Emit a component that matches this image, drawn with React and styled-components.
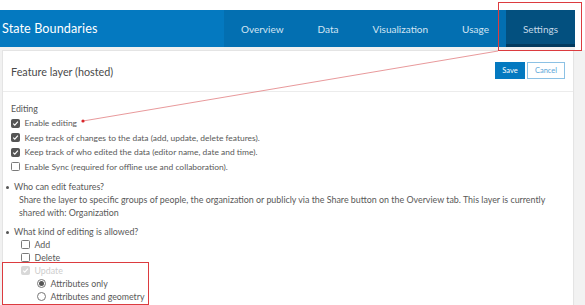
import React from "react";
import styled, { createGlobalStyle } from "styled-components";

const Global = createGlobalStyle`
  html, body { margin: 0; padding: 0; background: #fff; }
  body { font-family: Lato, "Open Sans", sans-serif; overflow: hidden; }
  * { box-sizing: border-box; }
`;

const Page = styled.div`
  position: relative;
  width: 585px;
  height: 305px;
  display: flex;
  overflow: hidden;
  background: #fff;
`;

const Main = styled.div`
  width: 575px;
  display: flex;
  flex-direction: column;
  background: #f1f1f1;
`;

const Gutter = styled.div`
  flex: 1;
  display: flex;
  flex-direction: column;
  &::before { content: ""; height: 50px; background: #fff; }
  &::after { content: ""; flex: 1; background: #f2f2f2; }
`;

const TopStrip = styled.div`
  height: 10px;
  background: #fff;
`;

const Header = styled.header`
  height: 37px;
  display: flex;
  align-items: stretch;
  background: #0479c0;
`;

const Title = styled.div`
  flex: 1;
  display: flex;
  align-items: center;
  padding-left: 2px;
  color: #fff;
  font-size: 12.6px;
  letter-spacing: 0.1px;
`;

const Nav = styled.nav`
  display: flex;
  align-items: stretch;
  background: #036fb1;
`;

const Tab = styled.div`
  display: flex;
  align-items: center;
  padding: 3px 17px 0;
  font-size: 10px;
  color: ${(p) => (p.$active ? "#c4d9e8" : "#d3e5f3")};
  background: ${(p) => (p.$active ? "#03507f" : "transparent")};
  border-bottom: 3px solid ${(p) => (p.$active ? "#023a5e" : "transparent")};
`;

const Band = styled.div`
  height: 3px;
`;

const Panel = styled.section`
  flex: 1;
  margin-left: 2px;
  margin-right: 1px;
  background: #fff;
  border: 1px solid #e4e4e4;
  border-bottom: none;
`;

const PanelHeader = styled.div`
  height: 41px;
  display: flex;
  align-items: center;
  justify-content: space-between;
  padding: 0 8px;
  border-bottom: 1px solid #ececec;
`;

const PanelTitle = styled.h2`
  margin: 0;
  font-weight: 400;
  font-size: 10.8px;
  color: #4a4a4a;
  padding-top: 1px;
`;

const Buttons = styled.div`
  display: flex;
  gap: 2px;
  margin-top: -1px;
`;

const Button = styled.button`
  height: 17px;
  padding: 0;
  width: ${(p) => (p.$primary ? "30px" : "38px")};
  font-family: inherit;
  font-size: 7.5px;
  border: 1px solid ${(p) => (p.$primary ? "#0479c0" : "#8cc1e4")};
  background: ${(p) => (p.$primary ? "#0479c0" : "#fff")};
  color: ${(p) => (p.$primary ? "#fff" : "#5aa6d8")};
`;

const Body = styled.div`
  padding: 8px 0 0 8px;
  color: #595959;
  font-size: 8.4px;
`;

const SectionLabel = styled.div`
  line-height: 15px;
  font-size: 8.8px;
  color: #555;
  padding-top: 1px;
`;

const CheckRow = styled.label`
  display: flex;
  align-items: center;
  gap: 4.5px;
  height: ${(p) => p.$h || 14.5}px;
  padding-left: ${(p) => p.$indent || 0}px;
  color: ${(p) => (p.$disabled ? "#cdcdcd" : "#595959")};
  font-size: ${(p) => p.$fs || 8.45}px;
`;

const Box = styled.span`
  width: 9px;
  height: 9px;
  border-radius: 1.5px;
  flex: none;
  display: inline-flex;
  align-items: center;
  justify-content: center;
  border: 1px solid ${(p) => (p.$checked ? (p.$disabled ? "#d8d8d8" : "#555") : "#7a7a7a")};
  background: ${(p) => (p.$checked ? (p.$disabled ? "#d8d8d8" : "#555") : "#fff")};
`;

const Radio = styled.span`
  width: 9px;
  height: 9px;
  border-radius: 50%;
  flex: none;
  border: 1px solid #777;
  background: #fff;
  display: inline-flex;
  align-items: center;
  justify-content: center;
  &::after {
    content: "";
    width: 5px;
    height: 5px;
    border-radius: 50%;
    background: ${(p) => (p.$checked ? "#555" : "transparent")};
  }
`;

const Bullet = styled.div`
  line-height: 13px;
  margin-top: ${(p) => p.$mt || 0}px;
  padding-left: ${(p) => p.$indent || 0}px;
  color: #595959;
  font-size: 8.9px;
  white-space: nowrap;
`;

const Dot = styled.span`
  display: inline-block;
  width: 3px;
  height: 3px;
  border-radius: 50%;
  background: #555;
  margin: 0 5px 1px -5px;
  vertical-align: middle;
`;

const Annotation = styled.div`
  position: absolute;
  border: 1.5px solid #dc3b3f;
  left: ${(p) => p.$x}px;
  top: ${(p) => p.$y}px;
  width: ${(p) => p.$w}px;
  height: ${(p) => p.$h}px;
  pointer-events: none;
`;

const Overlay = styled.svg`
  position: absolute;
  left: 0;
  top: 0;
  pointer-events: none;
`;

const Check = ({ checked, disabled, children, indent, h, fs }) => (
  <CheckRow $disabled={disabled} $indent={indent} $h={h} $fs={fs}>
    <Box $checked={checked} $disabled={disabled}>
      {checked && (
        <svg width="7" height="7" viewBox="0 0 7 7">
          <path d="M1.2 3.6 L2.8 5.1 L5.9 1.7" fill="none" stroke="#fff" strokeWidth="1.2" />
        </svg>
      )}
    </Box>
    <span>{children}</span>
  </CheckRow>
);

export default function App() {
  const tabs = ["Overview", "Data", "Visualization", "Usage", "Settings"];
  return (
    <>
      <Global />
      <Page>
        <Main>
          <TopStrip />
          <Header>
            <Title>State Boundaries</Title>
            <Nav>
              {tabs.map((t) => (
                <Tab key={t} $active={t === "Settings"}>{t}</Tab>
              ))}
            </Nav>
          </Header>
          <Band />
          <Panel>
            <PanelHeader>
              <PanelTitle>Feature layer (hosted)</PanelTitle>
              <Buttons>
                <Button $primary>Save</Button>
                <Button>Cancel</Button>
              </Buttons>
            </PanelHeader>
            <Body>
              <SectionLabel>Editing</SectionLabel>
              <Check checked>Enable editing</Check>
              <Check checked>Keep track of changes to the data (add, update, delete features).</Check>
              <Check checked>Keep track of who edited the data (editor name, date and time).</Check>
              <Check>Enable Sync (required for offline use and collaboration).</Check>
              <Bullet $mt={6}><Dot />Who can edit features?</Bullet>
              <Bullet $indent={8}>Share the layer to specific groups of people, the organization or publicly via the Share button on the Overview tab. This layer is currently</Bullet>
              <Bullet $indent={8}>shared with: Organization</Bullet>
              <Bullet $mt={6}><Dot />What kind of editing is allowed?</Bullet>
              <Check indent={10} h={13} fs={8.8}>Add</Check>
              <Check indent={10} h={13} fs={8.8}>Delete</Check>
              <Check indent={10} h={13} fs={8.8} checked disabled>Update</Check>
              <CheckRow $indent={26} $h={13} $fs={8.8}><Radio $checked /><span>Attributes only</span></CheckRow>
              <CheckRow $indent={26} $h={13} $fs={8.8}><Radio /><span>Attributes and geometry</span></CheckRow>
            </Body>
          </Panel>
        </Main>
        <Gutter />
        <Annotation $x={498} $y={2} $w={84} $h={49} />
        <Annotation $x={2} $y={262} $w={147} $h={43} />
        <Overlay width="585" height="305" viewBox="0 0 585 305">
          <line x1="498" y1="51" x2="83" y2="121" stroke="#e27f82" strokeWidth="0.8" />
          <circle cx="83" cy="121" r="1.6" fill="#d9262b" />
        </Overlay>
      </Page>
    </>
  );
}
